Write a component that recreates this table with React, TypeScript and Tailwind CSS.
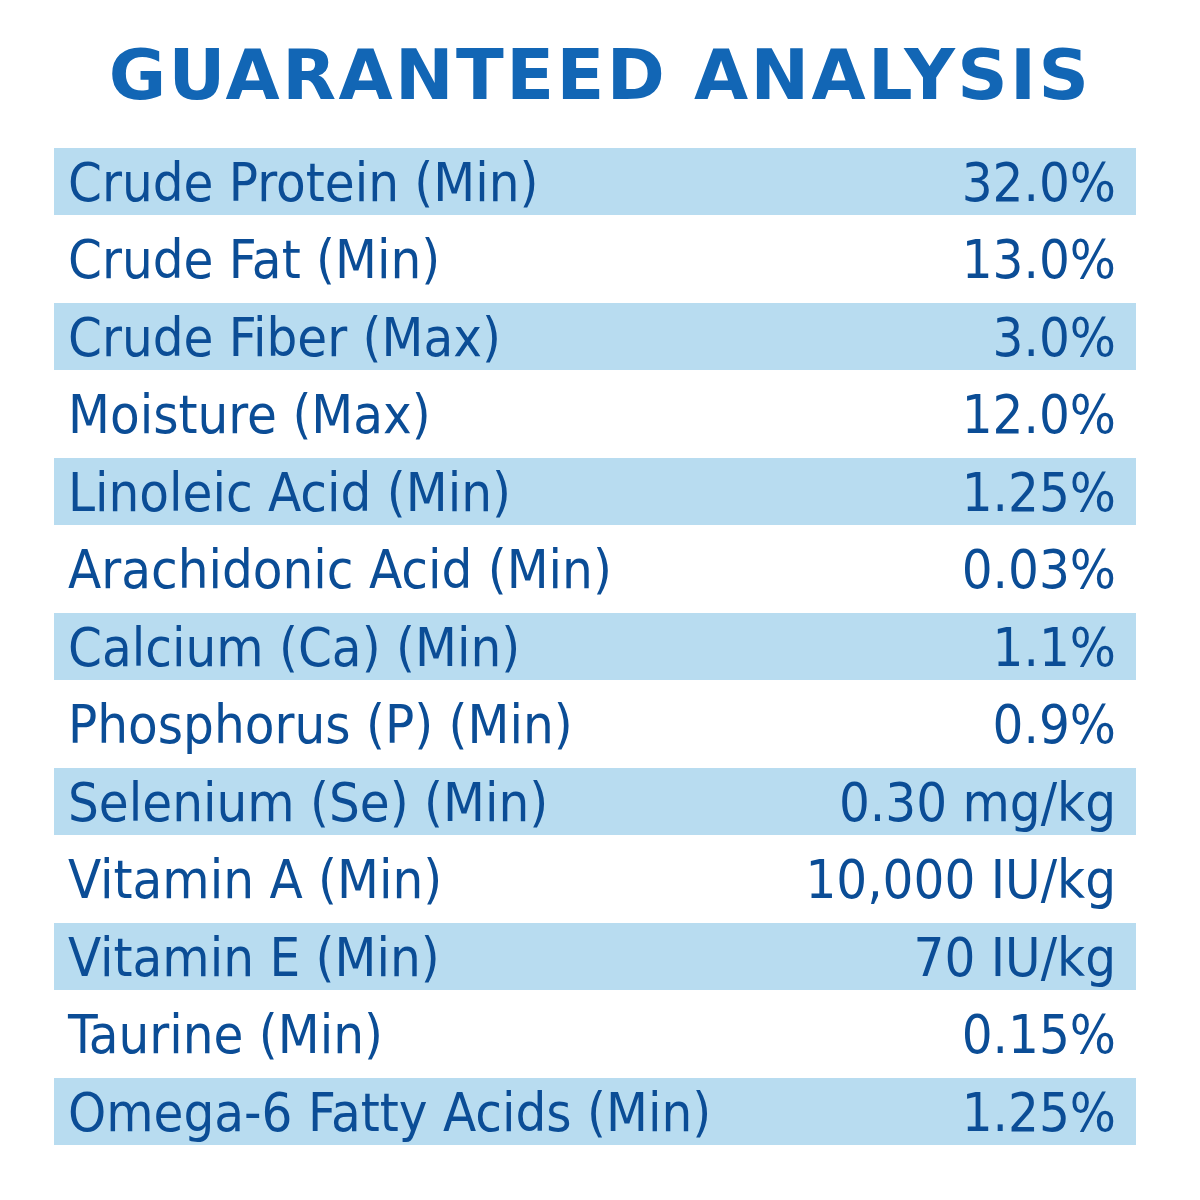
const rows: [string, string][] = [
  ["Crude Protein (Min)", "32.0%"],
  ["Crude Fat (Min)", "13.0%"],
  ["Crude Fiber (Max)", "3.0%"],
  ["Moisture (Max)", "12.0%"],
  ["Linoleic Acid (Min)", "1.25%"],
  ["Arachidonic Acid (Min)", "0.03%"],
  ["Calcium (Ca) (Min)", "1.1%"],
  ["Phosphorus (P) (Min)", "0.9%"],
  ["Selenium (Se) (Min)", "0.30 mg/kg"],
  ["Vitamin A (Min)", "10,000 IU/kg"],
  ["Vitamin E (Min)", "70 IU/kg"],
  ["Taurine (Min)", "0.15%"],
  ["Omega-6 Fatty Acids (Min)", "1.25%"],
];

export default function App() {
  return (
    <div className="w-[1200px] h-[1200px] bg-white flex flex-col">
      {/* Title */}
      <h1 className="h-[143px] flex items-center justify-center pt-[8px] text-[#1266b5] text-[70px] font-bold tracking-[2.4px] font-['DejaVu_Sans','Liberation_Sans',sans-serif]">
        GUARANTEED ANALYSIS
      </h1>

      {/* Rows */}
      <div className="flex flex-col pl-[54px] pr-[64px]">
        {rows.map(([label, value], i) => (
          <div key={label} className="h-[77.5px] flex items-center">
            <div
              className={
                "w-full h-[67px] flex items-center justify-between pl-[14px] pr-[20px] pt-[2px] text-[#0b4d96] text-[54px] leading-none font-['Liberation_Sans_Narrow','DejaVu_Sans_Condensed','DejaVu_Sans',sans-serif] " +
                (i % 2 === 0 ? "bg-[#b8dcf0]" : "bg-white")
              }
            >
              <span>{label}</span>
              <span>{value}</span>
            </div>
          </div>
        ))}
      </div>
    </div>
  );
}
